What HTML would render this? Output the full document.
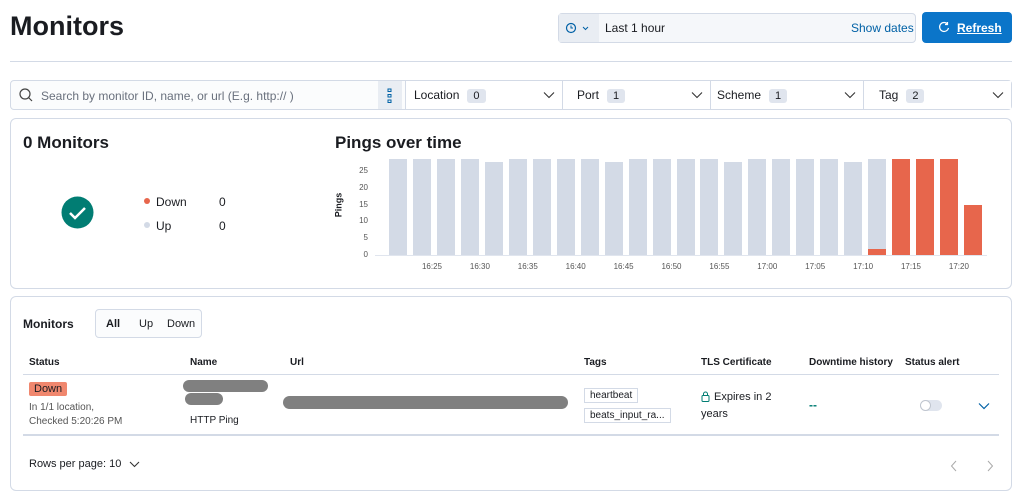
<!DOCTYPE html><html><head><style>
*{box-sizing:border-box;margin:0;padding:0}
body{width:1024px;height:502px;background:#fff;font-family:"Liberation Sans",sans-serif;color:#1a1c21;position:relative;overflow:hidden;font-size:12px}
.a{position:absolute}
.panel{position:absolute;border:1px solid #d3dae6;border-radius:6px;background:#fff}
.badge{display:inline-block;background:#e0e5ee;border-radius:3px;padding:1px 6px;font-size:11px;margin-left:8px}
.flt{position:absolute;top:81px;height:28px;border-left:1px solid #d3dae6;font-size:12px;padding:7px 8px;background:#fff}
.chev{position:absolute;right:7px;top:10px}
.th{position:absolute;top:357px;font-size:10px;font-weight:bold}
.bar{position:absolute;width:18px;background:#d3dae6}
.red{background:#e7664c}
.xl{position:absolute;top:262px;font-size:8px;color:#555;width:30px;text-align:center}
.yl{position:absolute;left:352px;font-size:8px;color:#555;width:16px;text-align:right}
</style></head><body>
<div class="a" style="left:10px;top:11px;font-size:27px;font-weight:bold">Monitors</div>
<div class="a" style="left:558px;top:13px;width:358px;height:30px;background:#f5f7fa;border:1px solid #d3dae6;border-radius:4px"></div>
<div class="a" style="left:559px;top:14px;width:40px;height:28px;background:#e9edf3"></div>
<svg class="a" style="left:565px;top:21px" width="28" height="14"><circle cx="6" cy="7" r="4.5" fill="none" stroke="#0061a6" stroke-width="1.2"/><path d="M6 4.5V7h2M18 6l2.5 2.5L23 6" fill="none" stroke="#0061a6" stroke-width="1"/></svg>
<div class="a" style="left:605px;top:21px;font-size:12px">Last 1 hour</div>
<div class="a" style="left:851px;top:21px;font-size:12px;color:#0061a6">Show dates</div>
<div class="a" style="left:922px;top:12px;width:90px;height:31px;background:#0b75c9;border-radius:4px;color:#fff;font-size:12px;font-weight:bold;padding:9px 0 0 35px;text-decoration:underline">Refresh</div>
<svg class="a" style="left:938px;top:21px" width="12" height="12"><path d="M9.5 3A4.5 4.5 0 1 0 10.5 7M9.5 1V3.5H7" fill="none" stroke="#fff" stroke-width="1.2"/></svg>
<div class="a" style="left:10px;top:61px;width:1002px;height:1px;background:#d3dae6"></div>
<div class="a" style="left:10px;top:80px;width:1002px;height:30px;border:1px solid #d3dae6;border-radius:4px;background:#fbfcfd"></div>
<svg class="a" style="left:18px;top:87px" width="16" height="16"><circle cx="7" cy="7" r="5" fill="none" stroke="#444" stroke-width="1.2"/><path d="M10.5 10.5l3.5 3.5" stroke="#444" stroke-width="1.2"/></svg>
<div class="a" style="left:41px;top:89px;color:#69707d;font-size:12px">Search by monitor ID, name, or url (E.g. http:// )</div>
<div class="a" style="left:378px;top:81px;width:24px;height:28px;background:#e9edf3"></div>
<svg class="a" style="left:386px;top:88px" width="8" height="16"><g fill="none" stroke="#0061a6" stroke-width="1"><rect x="2" y="1" width="3" height="2.5"/><rect x="2" y="6.5" width="3" height="2.5"/><rect x="2" y="12" width="3" height="2.5"/></g></svg>
<div class="flt" style="left:405px;width:157px">Location<span class="badge">0</span><svg class="chev" width="12" height="8"><path d="M1 1.5l5 5 5-5" fill="none" stroke="#333" stroke-width="1.1"/></svg></div>
<div class="flt" style="left:562px;width:148px;padding-left:14px">Port<span class="badge">1</span><svg class="chev" width="12" height="8"><path d="M1 1.5l5 5 5-5" fill="none" stroke="#333" stroke-width="1.1"/></svg></div>
<div class="flt" style="left:710px;width:153px;padding-left:6px">Scheme<span class="badge">1</span><svg class="chev" width="12" height="8"><path d="M1 1.5l5 5 5-5" fill="none" stroke="#333" stroke-width="1.1"/></svg></div>
<div class="flt" style="left:863px;width:148px;padding-left:15px">Tag<span class="badge">2</span><svg class="chev" width="12" height="8"><path d="M1 1.5l5 5 5-5" fill="none" stroke="#333" stroke-width="1.1"/></svg></div>
<div class="panel" style="left:10px;top:118px;width:1002px;height:171px"></div>
<div class="a" style="left:23px;top:133px;font-size:17px;font-weight:bold">0 Monitors</div>
<svg class="a" style="left:61px;top:196px" width="33" height="33"><circle cx="16.5" cy="16.5" r="16" fill="#017d73"/><path d="M9 17l5 5 10-10" fill="none" stroke="#fff" stroke-width="2.5"/></svg>
<div class="a" style="left:144px;top:198px;width:6px;height:6px;border-radius:3px;background:#e7664c"></div>
<div class="a" style="left:156px;top:195px">Down</div><div class="a" style="left:219px;top:195px">0</div>
<div class="a" style="left:144px;top:222px;width:6px;height:6px;border-radius:3px;background:#d3dae6"></div>
<div class="a" style="left:156px;top:219px">Up</div><div class="a" style="left:219px;top:219px">0</div>
<div class="a" style="left:335px;top:133px;font-size:17px;font-weight:bold">Pings over time</div>
<div class="a" style="left:326px;top:200px;font-size:9px;font-weight:bold;transform:rotate(-90deg)">Pings</div>
<div class="yl" style="top:166px">25</div><div class="yl" style="top:183px">20</div><div class="yl" style="top:200px">15</div><div class="yl" style="top:216px">10</div><div class="yl" style="top:233px">5</div><div class="yl" style="top:250px">0</div>
<div class="a" style="left:375px;top:255px;width:612px;height:1px;background:#e0e5ee"></div>
<div id="bars"></div>
<script>
var h='',tops=[159,159,159,159,162,159,159,159,159,162,159,159,159,159,162,159,159,159,159,162,159,159,159,159,205];
for(var i=0;i<25;i++){var x=389+i*23.96,t=tops[i];var c=(i>=21)?' red':'';h+='<div class="bar'+c+'" style="left:'+x+'px;top:'+t+'px;height:'+(255-t)+'px"></div>';}
h+='<div class="bar red" style="left:'+(389+20*23.96)+'px;top:249px;height:6px"></div>';
var L=['16:25','16:30','16:35','16:40','16:45','16:50','16:55','17:00','17:05','17:10','17:15','17:20'];
for(var j=0;j<12;j++){h+='<div class="xl" style="left:'+(417+j*47.9)+'px">'+L[j]+'</div>';}
document.getElementById('bars').innerHTML=h;
</script>
<div class="panel" style="left:10px;top:296px;width:1002px;height:195px"></div>
<div class="a" style="left:23px;top:317px;font-size:12px;font-weight:bold">Monitors</div>
<div class="a" style="left:95px;top:309px;width:107px;height:29px;border:1px solid #d3dae6;border-radius:4px;background:#fbfcfd"></div>
<div class="a" style="left:106px;top:318px;font-weight:bold;font-size:11px">All</div>
<div class="a" style="left:139px;top:318px;font-size:11px">Up</div>
<div class="a" style="left:167px;top:318px;font-size:11px">Down</div>
<div class="th" style="left:29px">Status</div><div class="th" style="left:190px">Name</div><div class="th" style="left:290px">Url</div><div class="th" style="left:584px">Tags</div><div class="th" style="left:701px">TLS Certificate</div><div class="th" style="left:809px">Downtime history</div><div class="th" style="left:905px">Status alert</div>
<div class="a" style="left:23px;top:374px;width:976px;height:1px;background:#d3dae6"></div>
<div class="a" style="left:23px;top:434px;width:976px;height:2px;background:#d3dae6"></div>
<div class="a" style="left:29px;top:382px;background:#f0876e;padding:1px 5px;font-size:11px;border-radius:2px">Down</div>
<div class="a" style="left:29px;top:402px;font-size:10px;color:#555">In 1/1 location,</div>
<div class="a" style="left:29px;top:416px;font-size:10px;color:#555">Checked 5:20:26 PM</div>
<div class="a" style="left:183px;top:380px;width:85px;height:12px;border-radius:6px;background:#808080"></div>
<div class="a" style="left:185px;top:393px;width:38px;height:12px;border-radius:6px;background:#808080"></div>
<div class="a" style="left:190px;top:415px;font-size:10px">HTTP Ping</div>
<div class="a" style="left:283px;top:396px;width:285px;height:13px;border-radius:7px;background:#808080"></div>
<div class="a" style="left:584px;top:388px;border:1px solid #d3dae6;padding:1px 5px;font-size:10px">heartbeat</div>
<div class="a" style="left:584px;top:408px;border:1px solid #d3dae6;padding:1px 5px;font-size:10px">beats_input_ra...</div>
<svg class="a" style="left:701px;top:391px" width="9" height="11"><rect x="1" y="4.5" width="7" height="6" rx="1" fill="none" stroke="#017d73"/><path d="M2.5 4.5V3a2 2 0 0 1 4 0v1.5" fill="none" stroke="#017d73"/></svg>
<div class="a" style="left:714px;top:391px;font-size:11px">Expires in 2</div>
<div class="a" style="left:701px;top:408px;font-size:11px">years</div>
<div class="a" style="left:809px;top:398px;color:#017d73;font-weight:bold">--</div>
<div class="a" style="left:920px;top:400px;width:22px;height:11px;border-radius:6px;background:#e0e5ee"><div style="position:absolute;left:0;top:0;width:11px;height:11px;border-radius:6px;background:#fff;border:1px solid #c0c6cf"></div></div>
<svg class="a" style="left:978px;top:402px" width="12" height="8"><path d="M1 1.5l5 5 5-5" fill="none" stroke="#0061a6" stroke-width="1.2"/></svg>
<div class="a" style="left:29px;top:458px;font-size:11px">Rows per page: 10</div>
<svg class="a" style="left:129px;top:461px" width="11" height="7"><path d="M1 1l4.5 4.5L10 1" fill="none" stroke="#333" stroke-width="1.1"/></svg>
<svg class="a" style="left:950px;top:460px" width="8" height="12"><path d="M6 1L1.5 6 6 11" fill="none" stroke="#aaa"/></svg>
<svg class="a" style="left:986px;top:460px" width="8" height="12"><path d="M2 1l4.5 5L2 11" fill="none" stroke="#aaa"/></svg>
</body></html>
